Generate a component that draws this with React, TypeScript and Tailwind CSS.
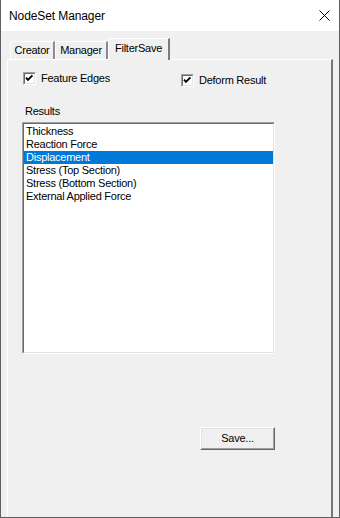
import React from "react";

const items = [
  "Thickness",
  "Reaction Force",
  "Displacement",
  "Stress (Top Section)",
  "Stress (Bottom Section)",
  "External Applied Force",
];

function CheckBox({ checked }: { checked: boolean }) {
  return (
    <div className="w-[13px] h-[13px] border border-t-[#a0a0a0] border-l-[#a0a0a0] border-b-white border-r-white shrink-0">
      <div className="w-full h-full border border-t-[#696969] border-l-[#696969] border-b-[#e3e3e3] border-r-[#e3e3e3] bg-white">
        {checked && (
          <svg width="9" height="9" viewBox="0 0 9 9" className="block">
            <path d="M1 3.6 L3 5.8 L7.4 1.4" fill="none" stroke="#000" strokeWidth="1.9" />
          </svg>
        )}
      </div>
    </div>
  );
}

export default function App() {
  return (
    <div className="w-[340px] h-[518px] flex flex-col border-l border-r border-b border-[#5f5f5f] bg-[#f0f0f0] font-['Liberation_Sans',Arial,sans-serif] text-black text-[11px] leading-[13px] tracking-[-0.25px] overflow-hidden">
      <div className="h-[31px] shrink-0 bg-white flex items-center justify-between pl-[8px] pr-[9px]">
        <span className="text-[12px] leading-[16px] tracking-[-0.1px]">NodeSet Manager</span>
        <svg width="11" height="11" viewBox="0 0 11 11" className="block">
          <path d="M0.5 0.5 L10.5 10.5 M10.5 0.5 L0.5 10.5" stroke="#000" strokeWidth="1" fill="none" />
        </svg>
      </div>
      <div className="flex-1 flex flex-col pl-[6px] pr-[6px] pt-[7px] min-h-0">
        <div className="h-[21px] flex items-end shrink-0">
          <div className="ml-[3px] w-[45px] h-[18px] border-l border-t border-white border-r-2 border-r-[#8a8a8a] flex items-center justify-center rounded-tl-[2px]">
            Creator
          </div>
          <div className="w-[53px] h-[18px] border-l border-t border-white border-r-2 border-r-[#8a8a8a] flex items-center justify-center">
            Manager
          </div>
          <div className="relative z-10 -mb-px w-[62px] h-[22px] bg-[#f0f0f0] border-l border-t border-white border-r-2 border-r-[#7a7a7a] flex items-start justify-center pt-[3px] rounded-tl-[2px]">
            FilterSave
          </div>
        </div>
        <div className="flex-1 border-l border-t border-white border-r-2 border-r-[#777777] flex flex-col pl-[14px] pt-[12px]">
          <div className="flex items-start h-[15px]">
            <div className="flex items-center ml-[1px] w-[158px]">
              <CheckBox checked />
              <span className="ml-[5px]">Feature Edges</span>
            </div>
            <div className="flex items-center mt-[2px]">
              <CheckBox checked />
              <span className="ml-[5px]">Deform Result</span>
            </div>
          </div>
          <div className="mt-[18px] ml-[3px]">Results</div>
          <div className="mt-[4px] w-[253px] h-[232px] border border-t-[#a0a0a0] border-l-[#a0a0a0] border-b-white border-r-white">
            <div className="w-full h-full border border-t-[#696969] border-l-[#696969] border-b-[#e3e3e3] border-r-[#e3e3e3] bg-white pt-[1px]">
              {items.map((it, i) => (
                <div
                  key={it}
                  className={
                    i === 2
                      ? "h-[13px] pl-[2px] bg-[#0078d7] text-white whitespace-nowrap"
                      : "h-[13px] pl-[2px] whitespace-nowrap"
                  }
                >
                  {it}
                </div>
              ))}
            </div>
          </div>
          <div className="w-[253px] flex justify-end mt-[73px]">
            <div className="w-[75px] h-[23px] border border-t-white border-l-white border-b-[#696969] border-r-[#696969]">
              <div className="w-full h-full border border-t-[#e3e3e3] border-l-[#e3e3e3] border-b-[#a0a0a0] border-r-[#a0a0a0] bg-[#f0f0f0] flex items-center justify-center">
                Save...
              </div>
            </div>
          </div>
        </div>
      </div>
    </div>
  );
}
